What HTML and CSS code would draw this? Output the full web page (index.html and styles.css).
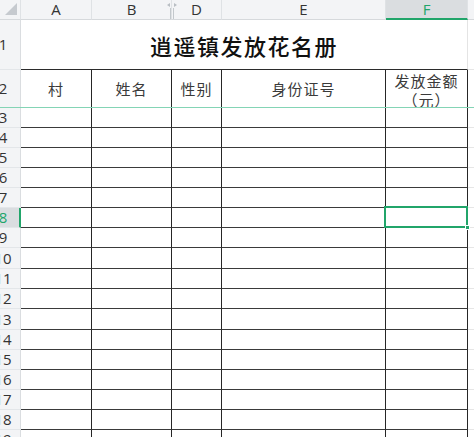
FILE: index.html
```html
<!DOCTYPE html>
<html lang="zh-CN">
<head>
<meta charset="utf-8">
<title>逍遥镇发放花名册</title>
<link rel="stylesheet" href="styles.css">
</head>
<body>
<div class="sheet">
  <div class="grid">
    <div class="ch corner"><span class="tri"></span></div>
    <div class="ch">A</div>
    <div class="ch hidcol">B<svg class="hid" width="12" height="18" viewBox="0 0 12 18"><path d="M4 2 L1 4 L4 6 Z M8 2 L11 4 L8 6 Z" fill="#b9bec3"/><path d="M4.5 7 V18 M7.5 7 V18" stroke="#c3c8cc" stroke-width="1"/></svg></div>
    <div class="ch">D</div>
    <div class="ch">E</div>
    <div class="ch sel">F</div>
    <div class="ch g"></div>

    <div class="rh"><span>1</span></div>
    <div class="title">逍遥镇发放花名册</div>
    <div class="gc tg"></div>

    <div class="rh"><span>2</span></div>
    <div class="c hd">村</div>
    <div class="c hd">姓名</div>
    <div class="c hd">性别</div>
    <div class="c hd">身份证号</div>
    <div class="c hd two">发放金额<br>（元）</div>
    <div class="gc"></div>

    <div class="rh"><span>3</span></div><div class="c"></div><div class="c"></div><div class="c"></div><div class="c"></div><div class="c"></div><div class="gc"></div>
    <div class="rh"><span>4</span></div><div class="c"></div><div class="c"></div><div class="c"></div><div class="c"></div><div class="c"></div><div class="gc"></div>
    <div class="rh"><span>5</span></div><div class="c"></div><div class="c"></div><div class="c"></div><div class="c"></div><div class="c"></div><div class="gc"></div>
    <div class="rh"><span>6</span></div><div class="c"></div><div class="c"></div><div class="c"></div><div class="c"></div><div class="c"></div><div class="gc"></div>
    <div class="rh"><span>7</span></div><div class="c"></div><div class="c"></div><div class="c"></div><div class="c"></div><div class="c"></div><div class="gc"></div>
    <div class="rh rsel"><span>8</span></div><div class="c"></div><div class="c"></div><div class="c"></div><div class="c"></div><div class="c"></div><div class="gc"></div>
    <div class="rh"><span>9</span></div><div class="c"></div><div class="c"></div><div class="c"></div><div class="c"></div><div class="c"></div><div class="gc"></div>
    <div class="rh"><span>10</span></div><div class="c"></div><div class="c"></div><div class="c"></div><div class="c"></div><div class="c"></div><div class="gc"></div>
    <div class="rh"><span>11</span></div><div class="c"></div><div class="c"></div><div class="c"></div><div class="c"></div><div class="c"></div><div class="gc"></div>
    <div class="rh"><span>12</span></div><div class="c"></div><div class="c"></div><div class="c"></div><div class="c"></div><div class="c"></div><div class="gc"></div>
    <div class="rh"><span>13</span></div><div class="c"></div><div class="c"></div><div class="c"></div><div class="c"></div><div class="c"></div><div class="gc"></div>
    <div class="rh"><span>14</span></div><div class="c"></div><div class="c"></div><div class="c"></div><div class="c"></div><div class="c"></div><div class="gc"></div>
    <div class="rh"><span>15</span></div><div class="c"></div><div class="c"></div><div class="c"></div><div class="c"></div><div class="c"></div><div class="gc"></div>
    <div class="rh"><span>16</span></div><div class="c"></div><div class="c"></div><div class="c"></div><div class="c"></div><div class="c"></div><div class="gc"></div>
    <div class="rh"><span>17</span></div><div class="c"></div><div class="c"></div><div class="c"></div><div class="c"></div><div class="c"></div><div class="gc"></div>
    <div class="rh"><span>18</span></div><div class="c"></div><div class="c"></div><div class="c"></div><div class="c"></div><div class="c"></div><div class="gc"></div>
    <div class="rh"><span>19</span></div><div class="c"></div><div class="c"></div><div class="c"></div><div class="c"></div><div class="c"></div><div class="gc"></div>
  </div>
  <div class="freeze"></div>
  <div class="selbox"><span class="handle"></span></div>
</div>
</body>
</html>
```

FILE: styles.css
```css
* { box-sizing: border-box; }
html, body { margin: 0; padding: 0; background: #fff; }
body { width: 474px; height: 437px; overflow: hidden; }

.sheet {
  position: relative;
  width: 474px;
  height: 437px;
  overflow: hidden;
}

.grid {
  display: grid;
  grid-template-columns: 21px 71px 80px 50px 164px 82px 40px;
  grid-template-rows: 20px 50px 38px repeat(7, 20px) 21px 20px 20px 21px repeat(6, 20px);
}

.ch {
  background: #f3f4f6;
  border-right: 1px solid #dfe2e5;
  border-bottom: 1px solid #d6d9dc;
  display: flex;
  align-items: center;
  justify-content: center;
  font-family: "Open Sans", "Noto Sans", sans-serif;
  font-size: 15px;
  color: #333;
  line-height: 1;
  padding-bottom: 1px;
}
.corner { position: relative; }
.tri {
  position: absolute;
  left: 5px;
  top: 3px;
  width: 0;
  height: 0;
  border-left: 12px solid transparent;
  border-bottom: 12px solid #c6cacf;
}
.hidcol { position: relative; }
.hid { position: absolute; right: -7px; top: 1px; }
.ch.sel {
  background: #dadde0;
  color: #21a56a;
  border-bottom: 2px solid #21a56a;
  padding-bottom: 0;
}
.ch.g { border-right: none; }

.rh {
  background: #f3f4f6;
  border-right: 1px solid #dadde0;
  border-bottom: 1px solid #e3e6e9;
  overflow: hidden;
  display: flex;
  align-items: center;
  font-family: "Open Sans", "Noto Sans", sans-serif;
  font-size: 15px;
  color: #333;
}
.rh span {
  display: block;
  flex: none;
  width: 36px;
  margin-left: -15px;
  text-align: center;
  line-height: 1;
}
.rh.rsel {
  background: #dadde0;
  color: #21a56a;
  border-right: 2px solid #21a56a;
}

.title {
  grid-column: 2 / 7;
  border-bottom: 1px solid #2b2b2b;
  border-right: 1px solid #e4e4e4;
  display: flex;
  align-items: center;
  justify-content: center;
  font-family: "Noto Sans CJK SC", sans-serif;
  font-size: 22px;
  font-weight: 500;
  letter-spacing: 1.5px;
  color: #111;
  padding-top: 1px;
}

.c {
  border-right: 1px solid #262626;
  border-bottom: 1px solid #3a3a3a;
}
.hd {
  display: flex;
  align-items: center;
  justify-content: center;
  font-family: "Noto Sans CJK SC", sans-serif;
  font-size: 15px;
  color: #3a3a3a;
  text-align: center;
  letter-spacing: 1px;
}
.hd.two {
  line-height: 19px;
  align-items: flex-start;
  padding-top: 1px;
}

.gc {
  border-bottom: 1px solid #e6e6e6;
}

.freeze {
  position: absolute;
  left: 0;
  top: 107px;
  width: 474px;
  height: 1px;
  background: #84d4b5;
}

.selbox {
  position: absolute;
  left: 384px;
  top: 206px;
  width: 84px;
  height: 22px;
  border: 2px solid #21a56a;
}
.handle {
  position: absolute;
  right: -4px;
  bottom: -4px;
  width: 5px;
  height: 5px;
  background: #21a56a;
  border: 1px solid #fff;
}
```
